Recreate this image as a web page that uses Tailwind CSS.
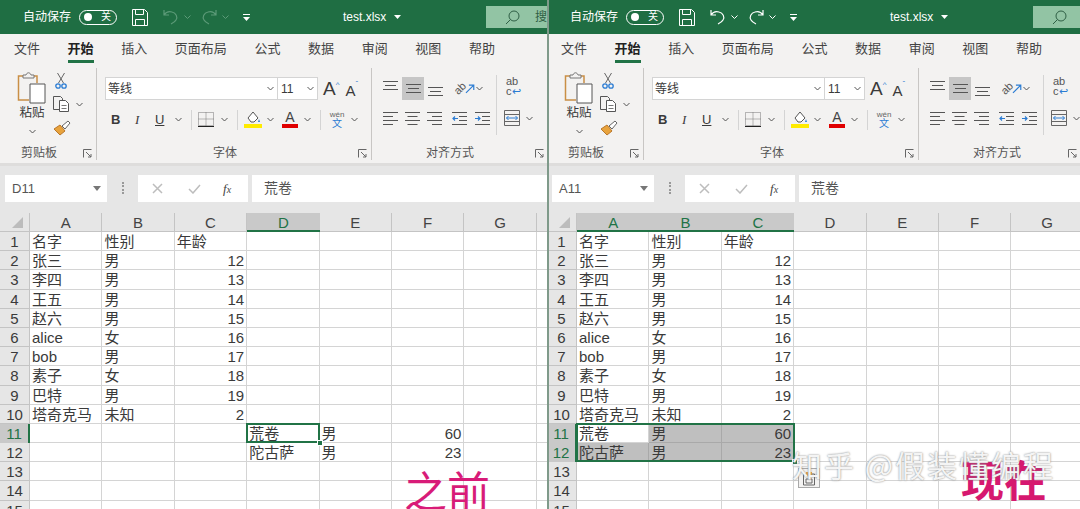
<!DOCTYPE html>
<html lang="zh">
<head>
    <meta charset="UTF-8">
    <script src="https://cdn.jsdelivr.net/npm/@tailwindcss/browser@4"></script>
    <title>test.xlsx</title>
</head>
<body class="relative flex w-[1080px] h-[509px] overflow-hidden bg-white text-[#3a3a3a] font-['Liberation_Sans','Noto_Sans_CJK_SC',sans-serif]">

    <div id="left" class="relative w-[547px] h-[509px] shrink-0 overflow-hidden"></div>
    <div id="right" class="relative w-[533px] h-[509px] shrink-0 overflow-hidden"></div>

    <!-- Captions and watermark over the screenshots -->
    <div class="absolute left-[404px] top-[461px] text-[43px] leading-[56px] text-[#d81b78] font-['Noto_Sans_CJK_SC',sans-serif]">之前</div>
    <div class="absolute left-[961px] top-[450px] text-[43px] leading-[56px] font-bold text-[#d6186f] font-['Noto_Sans_CJK_SC',sans-serif]">现在</div>
    <div class="absolute left-[792px] top-[442px] text-[30px] leading-[44px] tracking-[2px] whitespace-nowrap text-[#f4f4f4] [text-shadow:0_0_2px_#777] font-['Noto_Sans_CJK_SC',sans-serif]">知乎 @假装懂编程</div>

    <script>
        const rows = [
            ["名字", "性别", "年龄"], ["张三", "男", 12], ["李四", "男", 13], ["王五", "男", 14],
            ["赵六", "男", 15], ["alice", "女", 16], ["bob", "男", 17], ["素子", "女", 18],
            ["巴特", "男", 19], ["塔奇克马", "未知", 2],
        ];
        const moved = [["荒卷", "男", 60], ["陀古萨", "男", 23]];
        const letters = ["A", "B", "C", "D", "E", "F", "G", ""];

        const chev = (cls) => `<svg class="${cls} shrink-0" width="7" height="5" viewBox="0 0 7 5"><path d="M.5 1 3.5 4 6.5 1" fill="none" stroke="#555" stroke-width="1"/></svg>`;
        const launcher = `<svg class="shrink-0" width="9" height="9" viewBox="0 0 9 9" fill="none" stroke="#666"><path d="M.5 8.5V.5h8M3 3l5 5M8 5v3H5"/></svg>`;
        const sep = `<span class="block w-px h-[20px] bg-[#d4d4d4] shrink-0"></span>`;

        // Four horizontal lines, for the alignment buttons
        function lines(widths, cls) {
            const ys = [1, 5, 9, 13];
            const x = widths.map((w, i) => `<path d="M${(15 - w) * (cls === "r" ? 1 : cls === "c" ? .5 : 0)} ${ys[i] + .5}h${w}"/>`).join("");
            return `<svg class="shrink-0" width="15" height="15" viewBox="0 0 15 15" fill="none" stroke="#555">${x}</svg>`;
        }
        const vAlign = (y) => `<svg class="shrink-0" width="15" height="17" viewBox="0 0 15 17" fill="none" stroke="#555"><path d="M0 ${y + .5}h15M2 ${y + 4.5}h11M0 ${y + 8.5}h15"/></svg>`;
        const indent = (d) => `<svg class="shrink-0" width="15" height="15" viewBox="0 0 15 15" fill="none"><path d="M0 1.5h15M7 5.5h8M7 9.5h8M0 13.5h15" stroke="#555"/><path d="${d}" stroke="#2b7cd3" stroke-width="1.2"/></svg>`;

        function titleBar(on) {
            const undo = on ? "#ffffff" : "#5c9a78";
            return `
            <div class="flex items-center h-[34px] bg-[#1f6e43] text-white text-[12px]">
                <span class="ml-[23px] w-[49px] whitespace-nowrap">自动保存</span>
                <span class="ml-[7px] flex items-center w-[38px] h-[15px] rounded-full border border-white">
                    <span class="ml-[4px] w-[8px] h-[8px] rounded-full bg-white"></span>
                    <span class="ml-[9px] text-[10px] leading-none">关</span>
                </span>
                <svg class="ml-[15px]" width="16" height="17" viewBox="0 0 16 17" fill="none" stroke="#fff"><path d="M.5.5h12l3 3v13H.5zM3.5.5v5h8v-5M3.5 16.5v-6h9v6"/></svg>
                <svg class="ml-[15px]" width="16" height="16" viewBox="0 0 16 16" fill="none" stroke="${undo}" stroke-width="1.2"><path d="M1 1v5h5M1 6c2-3 5-4 8-3 4 1 6 5 4 8-1 2-3 3-5 4"/></svg>
                <svg class="ml-[5px]" width="7" height="4" viewBox="0 0 7 4" fill="none" stroke="${undo}"><path d="M.5.5l3 3 3-3"/></svg>
                <svg class="ml-[10px]" width="16" height="16" viewBox="0 0 16 16" fill="none" stroke="${undo}" stroke-width="1.2"><path d="M15 1v5h-5M15 6c-2-3-5-4-8-3-4 1-6 5-4 8 1 2 3 3 5 4"/></svg>
                <svg class="ml-[5px]" width="7" height="4" viewBox="0 0 7 4" fill="none" stroke="${undo}"><path d="M.5.5l3 3 3-3"/></svg>
                <svg class="ml-[14px]" width="7" height="7" viewBox="0 0 7 7" fill="#fff"><path d="M0 0h7v1H0zM0 3h7L3.500 7z"/></svg>
                <span class="ml-[93px] w-[46px] font-['Liberation_Sans',sans-serif]">test.xlsx</span>
                <svg class="ml-[5px]" width="7" height="4" viewBox="0 0 7 4" fill="#fff"><path d="M0 0h7L3.500 4z"/></svg>
                <span class="ml-[85px] flex-1 flex items-center h-[22px] bg-[#92c4a4] overflow-hidden">
                    <svg class="ml-[19px] shrink-0" width="15" height="15" viewBox="0 0 15 15" fill="none" stroke="#2f5f45"><circle cx="9" cy="6" r="5"/><path d="M5.500 9.500 1 14"/></svg>
                    <span class="ml-[15px] shrink-0 text-[#2f5f45] text-[12px]">搜</span>
                </span>
            </div>`;
        }

        function tabs() {
            const names = ["文件", "开始", "插入", "页面布局", "公式", "数据", "审阅", "视图", "帮助"];
            return `<div class="flex gap-[27.600px] pl-[14px] h-[34px] bg-[#f3f2f1] text-[13px] text-[#444] whitespace-nowrap">` +
                names.map(n => n === "开始"
                    ? `<span class="relative pt-[5px] font-bold text-[#222]">${n}<span class="absolute left-0 right-0 top-[26px] h-[2.500px] bg-[#217346]"></span></span>`
                    : `<span class="pt-[5px]">${n}</span>`).join("") + `</div>`;
        }

        function clipboard() {
            return `
            <div class="flex flex-col w-[97px] shrink-0 h-[92px] border-r border-[#c8c6c4]">
                <div class="flex h-[77px] pl-[17px] shrink-0">
                    <div class="flex flex-col items-center w-[30px] pt-[3px]">
                        <svg width="30" height="33" viewBox="0 0 30 33" fill="none"><path d="M6 5H1.500v24H12" stroke="#c98f45" stroke-width="1.500"/><path d="M16 5h4v7" stroke="#c98f45" stroke-width="1.500"/><path d="M6 7V4h3c1-3 4-3 5 0h3v3z" fill="#f3f2f1" stroke="#777"/><path d="M13 13h15v19H13z" fill="#fff" stroke="#555"/></svg>
                        <span class="mt-[1px] text-[12.500px] leading-[17px] whitespace-nowrap">粘贴</span>
                        ${chev("mt-[7px]")}
                    </div>
                    <div class="flex flex-col ml-[6px] pt-[4px]">
                        <svg class="ml-[2px]" width="12" height="17" viewBox="0 0 12 17" fill="none"><path d="M2.500 1l6 10M9.500 1l-6 10" stroke="#666"/><circle cx="3" cy="14" r="2.200" stroke="#2b7cd3" stroke-width="1.300"/><circle cx="9" cy="14" r="2.200" stroke="#2b7cd3" stroke-width="1.300"/></svg>
                        <span class="flex items-center mt-[7px]">
                            <svg width="17" height="16" viewBox="0 0 17 16" fill="#f3f2f1" stroke="#555"><path d="M.5.5h7l2 2v11h-9z"/><path d="M6.500 4.500h6l3 3v8h-9z" fill="#fff"/><path d="M8.500 9.500h5M8.500 12.500h5" stroke="#777"/></svg>
                            ${chev("ml-[6px]")}
                        </span>
                        <svg class="mt-[8px]" width="18" height="16" viewBox="0 0 18 16" fill="none"><path d="M1 9l6-4 5 6-5 4z" fill="#e8a33d" stroke="#b9772a"/><path d="M9 6l6-5 2 2-5 6z" fill="#fff" stroke="#666"/></svg>
                    </div>
                </div>
                <div class="flex items-center h-[16px] shrink-0 pl-[21px] text-[12px] text-[#555]">剪贴板<span class="ml-auto mr-[4px]">${launcher}</span></div>
            </div>`;
        }

        function fontGroup() {
            return `
            <div class="flex flex-col w-[275px] shrink-0 h-[92px] border-r border-[#c8c6c4]">
                <div class="flex items-center mt-[9px] h-[23px] shrink-0 pl-[8px]">
                    <span class="flex items-center w-[173px] h-[23px] bg-white border border-[#d4d4d4] pl-[2px] text-[12px]">等线${chev("ml-auto mr-[3px]")}</span>
                    <span class="flex items-center w-[40px] h-[23px] bg-white border border-l-0 border-[#d4d4d4] pl-[3px] text-[12px]">11${chev("ml-auto mr-[3px]")}</span>
                    <span class="ml-[5px] text-[19px] leading-none">A</span><span class="self-start mt-[4px] text-[#2b7cd3] text-[8px] leading-none">^</span>
                    <span class="ml-[6px] text-[15px] leading-none mt-[3px]">A</span><span class="self-start mt-[3px] text-[#2b7cd3] text-[8px] leading-none">ˇ</span>
                </div>
                <div class="flex items-center mt-[9px] h-[21px] shrink-0 text-[13px]">
                    <span class="ml-[14px] w-[10px] font-bold leading-none">B</span>
                    <span class="ml-[14px] w-[7px] italic leading-none font-['Liberation_Serif',serif]">I</span>
                    <span class="ml-[13px] w-[11px] underline leading-none">U</span>
                    ${chev("ml-[9px]")}
                    <span class="ml-[9px]">${sep}</span>
                    <svg class="ml-[6px]" width="16" height="15" viewBox="0 0 16 15" fill="none"><path d="M.5.500h15v13H.5zM8 .5v13M.5 7h15" stroke="#777" stroke-dasharray="1 1"/><path d="M0 14.500h16" stroke="#222"/></svg>
                    ${chev("ml-[7px]")}
                    <span class="ml-[9px]">${sep}</span>
                    <svg class="ml-[6px]" width="18" height="17" viewBox="0 0 18 17" fill="none"><path d="M4 7l5-6 5 6-4 4H7z" fill="#fff" stroke="#555"/><path d="M15 8l1 3-2 0z" fill="#2b7cd3"/><path d="M0 13h18v4H0z" fill="#ffeb00"/></svg>
                    ${chev("ml-[5px]")}
                    <span class="ml-[8px] flex flex-col items-center w-[16px] text-[14px] leading-[13px] text-[#444]">A<span class="w-[16px] h-[4px] bg-[#e00000]"></span></span>
                    ${chev("ml-[6px]")}
                    <span class="ml-[9px]">${sep}</span>
                    <span class="ml-[8px] flex flex-col items-center w-[16px] text-[8px] leading-[8px]"><span class="text-[#666]">wén</span><span class="text-[#2b7cd3] text-[10px] leading-[10px]">文</span></span>
                    ${chev("ml-[6px]")}
                </div>
                <div class="flex items-center mt-[15px] h-[16px] shrink-0 pl-[116px] text-[12px] text-[#555]">字体<span class="ml-auto mr-[4px]">${launcher}</span></div>
            </div>`;
        }

        function alignGroup() {
            return `
            <div class="flex flex-col flex-1 h-[92px]">
                <div class="flex h-[60px] shrink-0 mt-[7px]">
                    <div class="flex flex-col w-[125px] shrink-0 border-r border-[#d4d4d4]">
                        <div class="flex items-center h-[23px] mt-[2px] pl-[11px]">
                            ${vAlign(1)}
                            <span class="ml-[4px] flex items-center justify-center w-[22px] h-[23px] bg-[#c6c6c6]">${vAlign(4)}</span>
                            <span class="ml-[4px]">${vAlign(7)}</span>
                            <span class="ml-[11px] flex items-center w-[21px] h-[20px]">
                                <span class="-rotate-45 text-[11px] leading-none text-[#555]">ab</span>
                                <svg class="-ml-[1px]" width="10" height="10" viewBox="0 0 10 10" fill="none" stroke="#2b7cd3" stroke-width="1.200"><path d="M1 9l8-8M4 1h5v5"/></svg>
                            </span>
                            ${chev("ml-[1px]")}
                        </div>
                        <div class="flex items-center h-[20px] mt-[8px] pl-[11px]">
                            ${lines([15, 10, 15, 10], "l")}
                            <span class="ml-[7px]">${lines([15, 10, 15, 10], "c")}</span>
                            <span class="ml-[7px]">${lines([15, 10, 15, 10], "r")}</span>
                            <span class="ml-[10px]">${indent("M6 7.500H1M3 5.500 1 7.500l2 2")}</span>
                            <span class="ml-[8px]">${indent("M0 7.500h5M3 5.500l2 2-2 2")}</span>
                        </div>
                    </div>
                    <div class="flex flex-col pl-[9px]">
                        <span class="flex flex-col h-[25px] mt-[1px] text-[11px] leading-[10px] text-[#555]">ab<span class="flex items-center">c<span class="text-[#2b7cd3] text-[11px]">↩</span></span></span>
                        <div class="flex items-center h-[20px] mt-[7px] -ml-[2px]">
                            <svg width="16" height="16" viewBox="0 0 16 16" fill="none" stroke="#666"><path d="M.5.500h15v15H.5zM.5 4.500h15M.5 11.500h15"/><path d="M2.500 8h11M4.500 6l-2 2 2 2M11.500 6l2 2-2 2" stroke="#2b7cd3"/></svg>
                            ${chev("ml-[6px]")}
                        </div>
                    </div>
                </div>
                <div class="flex items-center mt-[10px] h-[16px] shrink-0 pl-[54px] text-[12px] text-[#555]">对齐方式<span class="ml-auto mr-[3px]">${launcher}</span></div>
            </div>`;
        }

        function formulaBar(ref) {
            return `
            <div class="flex h-[50px] bg-[#e6e6e6] pt-[12px] border-t-[3px] border-[#dedddc] box-border text-[#555]">
                <div class="flex items-center w-[102px] h-[27px] ml-[5px] -mt-[3px] bg-white pl-[7px] text-[13px] font-['Liberation_Sans',sans-serif]">${ref}
                    <svg class="ml-auto mr-[6px]" width="8" height="5" viewBox="0 0 8 5" fill="#777"><path d="M0 0h8L4 5z"/></svg>
                </div>
                <span class="ml-[15px] w-[2px] h-[12px] mt-[4px] border-l-2 border-dotted border-[#999]"></span>
                <div class="flex items-center w-[110px] h-[27px] ml-[14px] -mt-[3px] bg-white">
                    <svg class="ml-[14px]" width="11" height="11" viewBox="0 0 11 11" fill="none" stroke="#bdbdbd" stroke-width="1.500"><path d="M1 1l9 9M10 1l-9 9"/></svg>
                    <svg class="ml-[25px]" width="13" height="10" viewBox="0 0 13 10" fill="none" stroke="#bdbdbd" stroke-width="1.500"><path d="M1 5l4 4 7-8"/></svg>
                    <span class="ml-[22px] italic text-[13px] text-[#444] font-['Liberation_Serif',serif]">f<span class="text-[10px]">x</span></span>
                </div>
                <div class="flex items-center flex-1 h-[27px] ml-[4px] -mt-[3px] bg-white pl-[12px] text-[14px]">荒卷</div>
            </div>`;
        }

        function grid(isRight) {
            const selCols = isRight ? ["A", "B", "C"] : ["D"];
            const head = letters.map(l => selCols.includes(l)
                ? `<span class="w-[72.400px] shrink-0 h-full text-center bg-[#c9c9c9] border-b-2 border-[#217346] text-[#217346] leading-[19px]">${l}</span>`
                : `<span class="w-[72.400px] shrink-0 h-full text-center border-r border-b border-[#c4c4c4] bg-[#e6e6e6] leading-[19px]">${l}</span>`).join("");

            let body = "";
            for (let r = 1; r <= 15; r++) {
                let vals = ["", "", "", "", "", "", "", ""];
                if (r <= 10) vals = [...rows[r - 1], "", "", "", "", ""];
                else if (r <= 12) {
                    const m = moved[r - 11];
                    vals = isRight ? [...m, "", "", "", "", ""] : ["", "", "", ...m, "", ""];
                }
                const inSel = isRight && (r === 11 || r === 12);
                const cells = vals.map((v, i) => {
                    const shade = inSel && i < 3 && !(r === 11 && i === 0);
                    const bg = shade ? "bg-[#bfbfbf] border-[#a9a9a9]" : "border-[#d4d4d4]";
                    const align = typeof v === "number" ? "text-right pr-[2px]" : "pl-[2px]";
                    return `<span class="w-[72.400px] shrink-0 h-full border-r border-b whitespace-nowrap leading-[19px] ${bg} ${align}">${v}</span>`;
                }).join("");
                const hot = r === 11 || (isRight && r === 12);
                const num = hot
                    ? `<span class="w-[30px] shrink-0 h-full text-center leading-[19px] bg-[#c9c9c9] border-r-2 border-[#217346] text-[#217346]">${r}</span>`
                    : `<span class="w-[30px] shrink-0 h-full text-center leading-[19px] bg-[#e6e6e6] border-r border-b border-[#c4c4c4]">${r}</span>`;
                body += `<div class="flex h-[19.200px]">${num}${cells}</div>`;
            }

            const selection = isRight
                ? `<div class="absolute left-[29px] top-[210px] w-[219px] h-[39px] border-2 border-[#217346]"></div>
                   <div class="absolute left-[245px] top-[246px] w-[6px] h-[6px] bg-[#217346] border border-white"></div>
                   <div class="absolute left-[251px] top-[255px] flex items-center justify-center w-[22px] h-[20px] bg-[#f3f2f1] border border-[#a9a9a9]">
                       <svg width="14" height="15" viewBox="0 0 14 15" fill="none"><path d="M1.500 3h11v11h-11z" stroke="#666"/><path d="M4 1h6v4H4z" fill="#e8a33d"/><path d="M4 8h6v4H4z" stroke="#666"/></svg>
                   </div>`
                : `<div class="absolute left-[246px] top-[210px] w-[74px] h-[20px] border-2 border-[#217346]"></div>
                   <div class="absolute left-[317px] top-[227px] w-[6px] h-[6px] bg-[#217346] border border-white"></div>`;

            return `
            <div class="relative text-[15px]">
                <div class="flex h-[19px] text-[15px] text-[#444]">
                    <span class="flex items-end justify-end w-[30px] shrink-0 h-full bg-[#e6e6e6] border-r border-b border-[#c4c4c4] pr-[6px] pb-[3px]">
                        <svg width="11" height="11" viewBox="0 0 11 11" fill="#bcbcbc"><path d="M11 0v11H0z"/></svg>
                    </span>
                    ${head}
                </div>
                ${body}
                ${selection}
            </div>`;
        }

        function pane(isRight) {
            const ref = isRight ? "A11" : "D11";
            const divider = isRight ? `<div class="absolute left-0 top-0 w-[1.500px] h-[509px] bg-[#7f9a8a]"></div>` : "";
            return titleBar(isRight) + tabs() +
                `<div class="flex h-[95px] bg-[#f3f2f1]">${clipboard()}${fontGroup()}${alignGroup()}</div>` +
                formulaBar(ref) + grid(isRight) + divider;
        }

        document.getElementById("left").innerHTML = pane(false);
        document.getElementById("right").innerHTML = pane(true);
    </script>
</body>
</html>
